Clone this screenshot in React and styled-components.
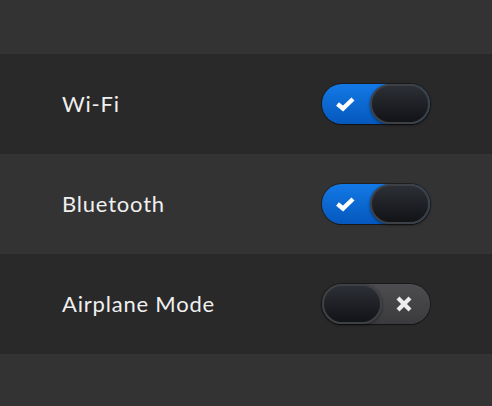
import { useState } from "react";
import styled, { createGlobalStyle } from "styled-components";

const GlobalStyle = createGlobalStyle`
  html, body {
    margin: 0;
    padding: 0;
    background: #333333;
  }
  body {
    font-family: Lato, "Open Sans", sans-serif;
  }
`;

const Page = styled.div`
  width: 492px;
  height: 406px;
  padding-top: 54px;
  box-sizing: border-box;
  background: #333333;
`;

const List = styled.ul`
  list-style: none;
  margin: 0;
  padding: 0;
`;

const Row = styled.li`
  height: 100px;
  display: flex;
  align-items: center;
  justify-content: space-between;
  padding: 0 62px 0 62px;
  background: ${(p) => (p.$dark ? "#292929" : "#333333")};
`;

const Label = styled.span`
  color: #f0f0f0;
  font-size: 22px;
  letter-spacing: 0.8px;
  margin-top: -2px;
`;

const Track = styled.button`
  position: relative;
  width: 108px;
  height: 40px;
  padding: 0;
  border: none;
  border-radius: 20px;
  cursor: pointer;
  display: flex;
  align-items: center;
  justify-content: ${(p) => (p.$on ? "flex-end" : "flex-start")};
  background: ${(p) =>
    p.$on
      ? "linear-gradient(#1379e6, #0558bd)"
      : "linear-gradient(#4d4d4f, #3b3b3d)"};
  box-shadow: 0 0 0 1px rgba(0, 0, 0, 0.35), 0 1px 1px rgba(0, 0, 0, 0.3);
`;

const Icon = styled.svg`
  position: absolute;
  top: 50%;
  transform: translateY(-50%);
  ${(p) => (p.$on ? "left: 13px;" : "right: 17px;")}
`;

const Knob = styled.span`
  width: 60px;
  height: 40px;
  box-sizing: border-box;
  border-radius: 20px;
  border: 2px solid #3d4045;
  background: linear-gradient(#2c2f35, #121317);
  box-shadow: 0 1px 3px rgba(0, 0, 0, 0.5);
`;

function Toggle({ on, onChange }) {
  return (
    <Track $on={on} onClick={onChange}>
      {on ? (
        <Icon $on width="20" height="16" viewBox="0 0 20 16">
          <polyline
            points="2.5,8 8,12.5 18,3"
            fill="none"
            stroke="#fff"
            strokeWidth="4.4"
            strokeLinejoin="miter"
          />
        </Icon>
      ) : (
        <Icon width="18" height="18" viewBox="0 0 18 18">
          <path
            d="M3 3 L15 15 M15 3 L3 15"
            stroke="#ececec"
            strokeWidth="4.2"
          />
        </Icon>
      )}
      <Knob />
    </Track>
  );
}

const initial = [
  { name: "Wi-Fi", on: true },
  { name: "Bluetooth", on: true },
  { name: "Airplane Mode", on: false },
];

export default function App() {
  const [items, setItems] = useState(initial);

  function flip(i) {
    setItems((list) =>
      list.map((it, j) => (j === i ? { ...it, on: !it.on } : it))
    );
  }

  return (
    <Page>
      <GlobalStyle />
      <List>
        {items.map((it, i) => (
          <Row key={it.name} $dark={i % 2 === 0}>
            <Label>{it.name}</Label>
            <Toggle on={it.on} onChange={() => flip(i)} />
          </Row>
        ))}
      </List>
    </Page>
  );
}
